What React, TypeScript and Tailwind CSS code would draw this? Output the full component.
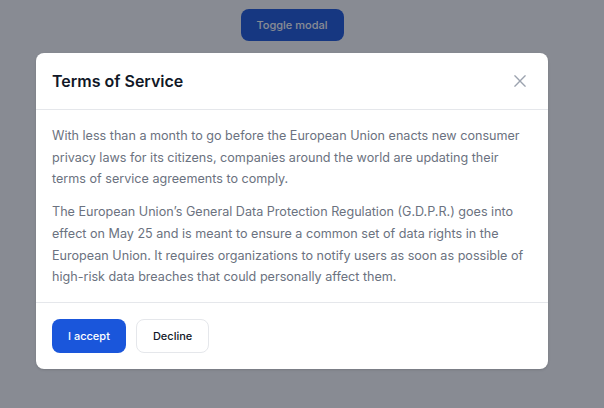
import React from "react";

const paragraphs = [
  "With less than a month to go before the European Union enacts new consumer privacy laws for its citizens, companies around the world are updating their terms of service agreements to comply.",
  "The European Union\u2019s General Data Protection Regulation (G.D.P.R.) goes into effect on May 25 and is meant to ensure a common set of data rights in the European Union. It requires organizations to notify users as soon as possible of high-risk data breaches that could personally affect them.",
];

const CloseIcon = () => (
  <svg viewBox="0 0 14 14" className="w-3 h-3" fill="none" aria-hidden="true">
    <path
      d="M1 1l12 12M13 1L1 13"
      stroke="currentColor"
      strokeWidth="1.6"
      strokeLinecap="round"
    />
  </svg>
);

export default function App() {
  return (
    <div
      className="relative w-full h-[408px] bg-white overflow-hidden"
      style={{ fontFamily: "Inter, 'Noto Sans', sans-serif" }}
    >
      {/* page behind the modal */}
      <div className="flex justify-center pr-5 pt-[9px]">
        <button className="bg-[#1a56db] text-white text-[11px] font-medium leading-4 px-4 py-2 rounded-lg">
          Toggle modal
        </button>
      </div>

      {/* overlay */}
      <div className="absolute inset-0 bg-[#111827]/50">
        <div className="flex justify-center pr-5 pt-[53px]">
          <div className="w-[512px] bg-white rounded-lg shadow-sm">
            <div className="flex items-center justify-between p-4 border-b border-[#e5e7eb]">
              <h3 className="text-base leading-6 font-semibold text-[#111827]">
                Terms of Service
              </h3>
              <button className="w-6 h-6 flex items-center justify-center text-[#9ca3af] rounded-lg">
                <CloseIcon />
              </button>
            </div>

            <div className="px-4 pt-[15px] pb-[14px] space-y-[11px]">
              {paragraphs.map((p, i) => (
                <p key={i} className="text-[12.6px] leading-[21.7px] text-[#6b7280]">
                  {p}
                </p>
              ))}
            </div>

            <div className="flex items-center gap-[10px] p-4 border-t border-[#e5e7eb]">
              <button className="bg-[#1a56db] text-white text-[11px] font-medium leading-4 px-4 py-[9px] rounded-lg">
                I accept
              </button>
              <button className="bg-white text-[#111827] text-[11px] font-medium leading-4 px-4 py-[8px] rounded-lg border border-[#e5e7eb]">
                Decline
              </button>
            </div>
          </div>
        </div>
      </div>
    </div>
  );
}
